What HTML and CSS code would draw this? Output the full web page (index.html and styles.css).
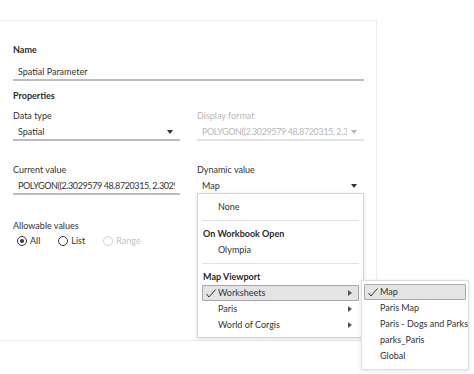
FILE: index.html
```html
<!DOCTYPE html>
<html lang="en">
<head>
    <meta charset="UTF-8">
    <meta name="viewport" content="width=device-width, initial-scale=1.0">
    <title>Edit Parameter</title>
    <link rel="stylesheet" href="styles.css">
</head>
<body>
    <div class="dialog">
        <div class="section-title">Name</div>
        <div class="field name-field"><span class="value">Spatial Parameter</span></div>

        <div class="section-title props">Properties</div>
        <div class="grid">
            <div class="cell">
                <div class="label">Data type</div>
                <div class="field select"><span class="value">Spatial</span><span class="caret"></span></div>
            </div>
            <div class="cell disabled">
                <div class="label">Display format</div>
                <div class="field select"><span class="value geo">POLYGON((2.3029579 48.8720315, 2.30</span><span class="caret"></span></div>
            </div>
            <div class="cell">
                <div class="label">Current value</div>
                <div class="field"><span class="value geo">POLYGON((2.3029579 48.8720315, 2.3029579 48.87</span></div>
            </div>
            <div class="cell">
                <div class="label">Dynamic value</div>
                <div class="field select open">
                    <span class="value">Map</span><span class="caret"></span>
                    <div class="menu">
                        <div class="item">None</div>
                        <div class="sep"></div>
                        <div class="heading">On Workbook Open</div>
                        <div class="item">Olympia</div>
                        <div class="sep"></div>
                        <div class="heading">Map Viewport</div>
                        <div class="item selected has-sub">
                            <svg class="check" width="10" height="9" viewBox="0 0 10 9"><polyline points="0.5,5 3,8 9.5,0.5" fill="none" stroke="#333" stroke-width="1"/></svg>
                            Worksheets<span class="arrow"></span>
                            <div class="submenu">
                                <div class="item selected">
                                    <svg class="check" width="10" height="9" viewBox="0 0 10 9"><polyline points="0.5,5 3,8 9.5,0.5" fill="none" stroke="#333" stroke-width="1"/></svg>
                                    Map
                                </div>
                                <div class="item">Paris Map</div>
                                <div class="item">Paris - Dogs and Parks</div>
                                <div class="item">parks_Paris</div>
                                <div class="item">Global</div>
                            </div>
                        </div>
                        <div class="item has-sub">Paris<span class="arrow"></span></div>
                        <div class="item has-sub">World of Corgis<span class="arrow"></span></div>
                    </div>
                </div>
            </div>
        </div>

        <div class="label allow">Allowable values</div>
        <div class="radios">
            <label class="radio checked"><span class="dot"></span>All</label>
            <label class="radio"><span class="dot"></span>List</label>
            <label class="radio off"><span class="dot"></span>Range</label>
        </div>
    </div>
</body>
</html>
```
FILE: styles.css
```css
body {
    margin: 0;
    min-height: 374px;
    background: #ffffff;
    font-family: Lato, "Open Sans", sans-serif;
    font-size: 9px;
    line-height: 12px;
    color: #333333;
}

.dialog {
    box-sizing: border-box;
    width: 377px;
    height: 321px;
    margin-top: 20px;
    padding: 23px 12px 0 13px;
    border-top: 1px solid #f0f0f0;
    border-right: 1px solid #ececec;
    border-bottom: 1px solid #ececec;
}

.section-title {
    font-weight: bold;
    color: #2b2b2b;
}

.section-title.props {
    margin-top: 9px;
}

.field {
    position: relative;
    display: flex;
    align-items: center;
    height: 15px;
    padding: 0 5px;
    border-bottom: 2px solid #bdbdbd;
    white-space: nowrap;
}

.field .value {
    flex: 1;
    overflow: hidden;
}

.field .geo {
    letter-spacing: -0.4px;
}

.name-field {
    margin-top: 8px;
}

.grid {
    display: grid;
    grid-template-columns: 167px 167px;
    column-gap: 17px;
    row-gap: 23px;
    margin-top: 8px;
}

.grid .field {
    margin-top: 2px;
}

.caret {
    width: 0;
    height: 0;
    margin-left: 4px;
    margin-right: 2px;
    border-left: 3px solid transparent;
    border-right: 3px solid transparent;
    border-top: 4px solid #333333;
}

.disabled {
    color: #b8b8b8;
}

.disabled .field {
    border-bottom-color: #e2e2e2;
}

.disabled .caret {
    border-top-color: #b8b8b8;
}

.field.open {
    border-bottom: none;
}

.menu {
    position: absolute;
    top: 100%;
    left: 0;
    box-sizing: border-box;
    width: 167px;
    height: 145px;
    padding: 5px 4px;
    background: #ffffff;
    border: 1px solid #d4d4d4;
    box-shadow: 0 1px 4px rgba(0, 0, 0, 0.12);
    z-index: 2;
}

.item,
.heading {
    position: relative;
    display: flex;
    align-items: center;
    box-sizing: border-box;
    height: 16px;
    padding-left: 15px;
    border: 1px solid transparent;
}

.heading {
    padding-left: 0;
    font-weight: bold;
    color: #2b2b2b;
}

.item.selected {
    background: #e4e4e4;
    border-color: #a9a9a9;
    border-radius: 1px;
}

.check {
    position: absolute;
    left: 3px;
    top: 3px;
}

.arrow {
    margin-left: auto;
    margin-right: 6px;
    width: 0;
    height: 0;
    border-top: 3px solid transparent;
    border-bottom: 3px solid transparent;
    border-left: 4px solid #555555;
}

.sep {
    height: 1px;
    margin: 5px 0;
    background: #e2e2e2;
}

.submenu {
    position: absolute;
    top: -6px;
    left: 158px;
    box-sizing: border-box;
    width: 108px;
    height: 90px;
    padding: 3px 2px;
    background: #ffffff;
    border: 1px solid #e0e0e0;
    box-shadow: 0 1px 4px rgba(0, 0, 0, 0.12);
}

.label.allow {
    margin-top: 25px;
}

.radios {
    display: flex;
    margin-top: 3px;
    padding-left: 4px;
    height: 12px;
}

.radio {
    display: flex;
    align-items: center;
    margin-right: 18px;
}

.radio .dot {
    position: relative;
    box-sizing: border-box;
    width: 10px;
    height: 10px;
    margin-right: 3px;
    border: 1px solid #333333;
    border-radius: 50%;
}

.radio.checked .dot::after {
    content: "";
    position: absolute;
    left: 2px;
    top: 2px;
    width: 4px;
    height: 4px;
    border-radius: 50%;
    background: #333333;
}

.radio.off {
    color: #c4c4c4;
}

.radio.off .dot {
    border-color: #d0d0d0;
}
```
